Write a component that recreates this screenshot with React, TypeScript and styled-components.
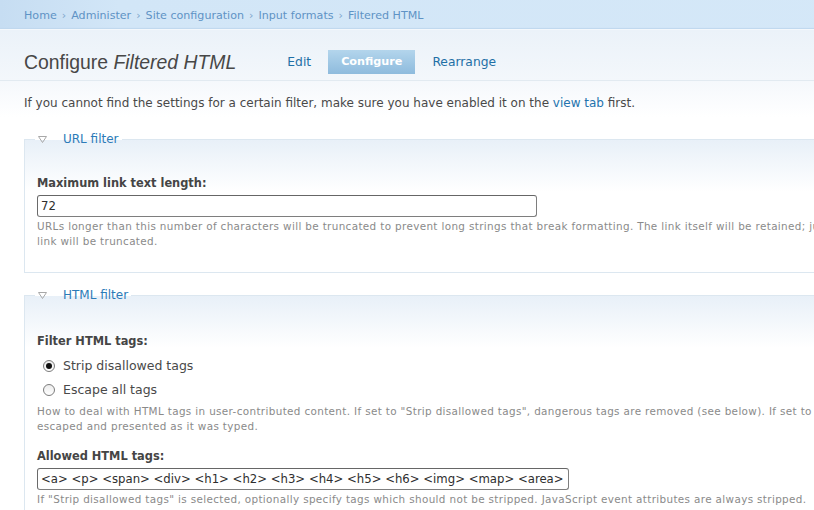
import React from 'react';
import styled, { createGlobalStyle } from 'styled-components';

const GlobalStyle = createGlobalStyle`
  html, body {
    margin: 0;
    padding: 0;
    background: #fff;
    overflow: hidden;
  }
  body {
    font-family: "DejaVu Sans", Verdana, sans-serif;
    font-size: 12px;
    color: #494949;
  }
`;

const Page = styled('div')`
  width: 990px;
`;

const Breadcrumb = styled('nav')`
  display: flex;
  align-items: center;
  box-sizing: border-box;
  height: 30px;
  padding: 1px 0 0 24px;
  background: linear-gradient(to right, #c6ddf2 0%, #d2e6f7 12%, #d5e8f8 100%);
  box-shadow: inset 0 -2px 1px -1px #bfd7ee;
  border-bottom: 1px solid #f4f8fc;
  font-size: 11.1px;
`;

const Crumb = styled('span')`
  color: #5f93c5;
`;

const Sep = styled('span')`
  margin: 0 5px;
  color: #7ea6cc;
`;

const Header = styled('header')`
  display: flex;
  align-items: center;
  box-sizing: border-box;
  height: 51px;
  padding: 14px 0 0 24px;
  background: linear-gradient(#ebf2f9, #f3f7fb);
  border-bottom: 1px solid #e2eaf1;
`;

const Title = styled('h1')`
  margin: 0;
  font-family: "Liberation Sans", Arial, sans-serif;
  font-size: 19.4px;
  font-weight: normal;
  color: #474747;

  em {
    font-style: italic;
  }
`;

const Tabs = styled('ul')`
  display: flex;
  gap: 4px;
  margin: -1px 0 0 38px;
  padding: 0;
  list-style: none;
`;

const Tab = styled('li')<{ $active?: boolean }>`
  display: flex;
  align-items: center;
  height: 24px;
  padding: 0 13px;
  font-size: ${(p) => (p.$active ? '11.2px' : '12.3px')};
  color: ${(p) => (p.$active ? '#fff' : '#1f70a6')};
  font-weight: ${(p) => (p.$active ? 'bold' : 'normal')};
  background: ${(p) => (p.$active ? 'linear-gradient(#b3d5ec, #8ebbdd)' : 'transparent')};
`;

const Content = styled('main')`
  padding: 13px 0 0 24px;
  background: linear-gradient(#f5f8fc, #fff 36px);
`;

const Intro = styled('p')`
  margin: 0 0 20px;
  line-height: 18px;

  a {
    color: #2373ad;
    text-decoration: none;
  }
`;

const Fieldset = styled('fieldset')`
  margin: 0 0 15px;
  padding: 0 12px 23px;
  border: 1px solid #dce7f0;
  background: linear-gradient(#e8f0f8, #fff 52px);
`;

const Legend = styled('legend')`
  display: flex;
  align-items: center;
  margin-left: -2px;
  padding: 0 3px;
  line-height: 15px;
  font-size: 12px;
  color: #2c7bb8;
`;

const Toggle = styled('svg')`
  width: 9px;
  height: 7px;
  margin-right: 16px;
`;

const Item = styled('div')<{ $top: number }>`
  margin-top: ${(p) => p.$top}px;
`;

const Label = styled('label')`
  display: block;
  margin-bottom: 4px;
  line-height: 15px;
  font-size: 11.4px;
  font-weight: bold;
  color: #454545;
`;

const TextField = styled('div')<{ $width: number }>`
  box-sizing: border-box;
  display: flex;
  align-items: center;
  width: ${(p) => p.$width}px;
  height: 22px;
  padding: 0 3px;
  border: 1px solid #7e7e7e;
  border-top-color: #666;
  border-left-color: #6a6a6a;
  border-radius: 3px;
  background: #fff;
  font-size: 11.7px;
  color: #2e2e2e;
  white-space: nowrap;
`;

const Description = styled('div')`
  margin-top: 2px;
  line-height: 15px;
  font-size: 10.4px;
  letter-spacing: 0.36px;
  color: #8a8a8a;
`;

const Radios = styled('div')`
  margin-top: 4.5px;
`;

const RadioRow = styled('div')`
  display: flex;
  align-items: center;
  gap: 8px;
  height: 24px;
  padding-left: 6px;
  font-size: 12.5px;
  color: #494949;
`;

const RadioDot = styled('span')<{ $checked?: boolean }>`
  position: relative;
  box-sizing: border-box;
  width: 12px;
  height: 12px;
  border: 1px solid #7c7c7c;
  border-radius: 50%;
  background: linear-gradient(#ececec, #fff);

  &::after {
    content: '';
    display: ${(p) => (p.$checked ? 'block' : 'none')};
    position: absolute;
    left: 2px;
    top: 2px;
    width: 6px;
    height: 6px;
    border-radius: 50%;
    background: #111;
  }
`;

function LegendToggle({ title }: { title: string }) {
  return (
    <Legend>
      <Toggle viewBox="0 0 9 7">
        <polygon points="0.5,0.5 8.5,0.5 4.5,6.5" fill="none" stroke="#a8a8a8" strokeWidth="1" />
      </Toggle>
      {title}
    </Legend>
  );
}

const crumbs = ['Home', 'Administer', 'Site configuration', 'Input formats', 'Filtered HTML'];

export default function App() {
  return (
    <Page>
      <GlobalStyle />
      <Breadcrumb>
        {crumbs.map((c, i) => (
          <React.Fragment key={c}>
            {i > 0 && <Sep>›</Sep>}
            <Crumb>{c}</Crumb>
          </React.Fragment>
        ))}
      </Breadcrumb>
      <Header>
        <Title>
          Configure <em>Filtered HTML</em>
        </Title>
        <Tabs>
          <Tab>Edit</Tab>
          <Tab $active>Configure</Tab>
          <Tab>Rearrange</Tab>
        </Tabs>
      </Header>
      <Content>
        <Intro>
          If you cannot find the settings for a certain filter, make sure you have enabled it on the{' '}
          <a href="#">view tab</a> first.
        </Intro>

        <Fieldset>
          <LegendToggle title="URL filter" />
          <Item $top={29}>
            <Label>Maximum link text length:</Label>
            <TextField $width={500}>72</TextField>
            <Description>
              URLs longer than this number of characters will be truncated to prevent long strings that
              break formatting. The link itself will be retained; just the text portion of the link will
              be truncated.
            </Description>
          </Item>
        </Fieldset>

        <Fieldset>
          <LegendToggle title="HTML filter" />
          <Item $top={31}>
            <Label>Filter HTML tags:</Label>
            <Radios>
              <RadioRow>
                <RadioDot $checked />
                Strip disallowed tags
              </RadioRow>
              <RadioRow>
                <RadioDot />
                Escape all tags
              </RadioRow>
            </Radios>
            <Description>
              How to deal with HTML tags in user-contributed content. If set to "Strip disallowed tags",
              dangerous tags are removed (see below). If set to "Escape tags", all HTML is escaped and
              presented as it was typed.
            </Description>
          </Item>
          <Item $top={15}>
            <Label>Allowed HTML tags:</Label>
            <TextField $width={532}>
              {'<a> <p> <span> <div> <h1> <h2> <h3> <h4> <h5> <h6> <img> <map> <area>'}
            </TextField>
            <Description>
              If "Strip disallowed tags" is selected, optionally specify tags which should not be
              stripped. JavaScript event attributes are always stripped.
            </Description>
          </Item>
        </Fieldset>
      </Content>
    </Page>
  );
}
